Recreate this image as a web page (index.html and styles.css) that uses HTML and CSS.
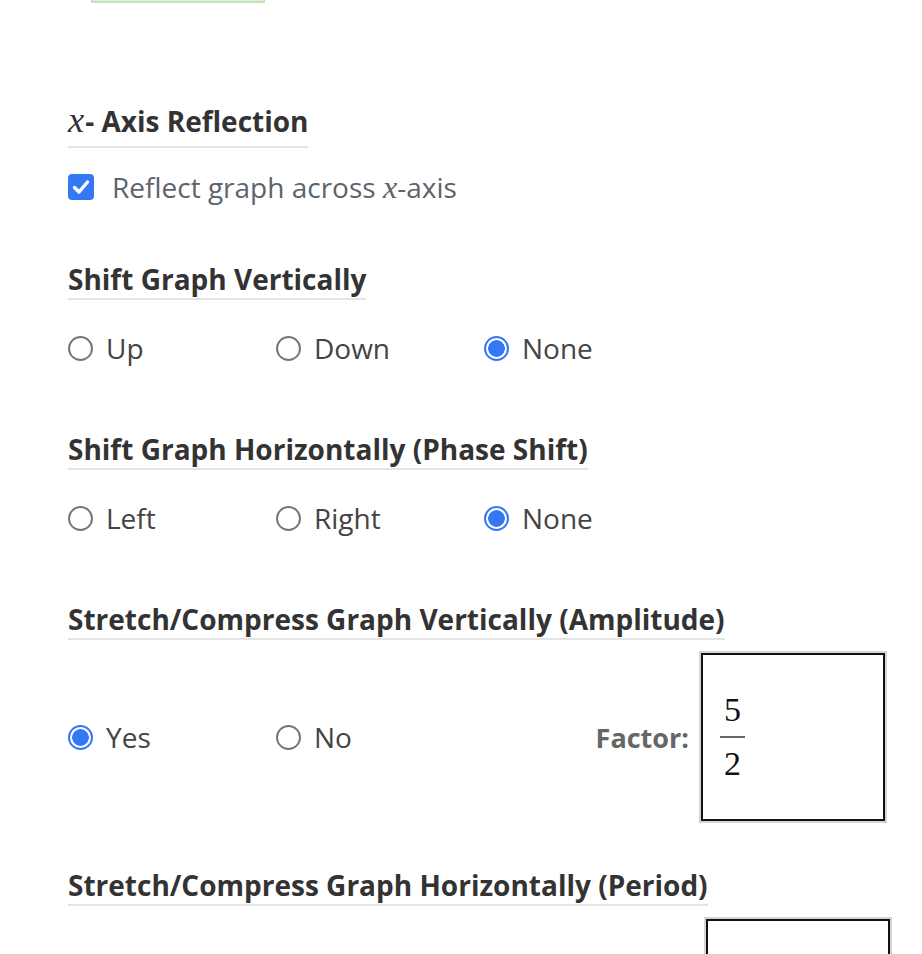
FILE: index.html
```html
<!DOCTYPE html>
<html>
    <head>
        <title>Graph Transformations</title>
        <meta charset="utf-8">
        <link rel="stylesheet" href="styles.css">
    </head>
    <body>
        <div class="top-box"></div>
        <form class="panel" name="graph">
            <section class="group first">
                <h2 class="title"><span class="var big">x</span>- Axis Reflection</h2>
                <div class="row check-row">
                    <label class="option">
                        <span class="check">
                            <svg width="26" height="26" viewBox="0 0 26 26"><rect x="0" y="0" width="26" height="26" rx="4" fill="#3478f6"/><path d="M6.5 13.5 L11 18 L19.5 8" fill="none" stroke="#fff" stroke-width="3.4" stroke-linecap="round" stroke-linejoin="round"/></svg>
                        </span>
                        <span class="check-text">Reflect graph across <span class="var">x</span>-axis</span>
                    </label>
                </div>
            </section>

            <section class="group">
                <h2 class="title">Shift Graph Vertically</h2>
                <div class="row">
                    <label class="option"><input type="radio" name="vshift" class="radio"> Up</label>
                    <label class="option"><input type="radio" name="vshift" class="radio"> Down</label>
                    <label class="option"><input type="radio" name="vshift" class="radio" checked> None</label>
                </div>
            </section>

            <section class="group">
                <h2 class="title">Shift Graph Horizontally (Phase Shift)</h2>
                <div class="row">
                    <label class="option"><input type="radio" name="hshift" class="radio"> Left</label>
                    <label class="option"><input type="radio" name="hshift" class="radio"> Right</label>
                    <label class="option"><input type="radio" name="hshift" class="radio" checked> None</label>
                </div>
            </section>

            <section class="group amp">
                <h2 class="title">Stretch/Compress Graph Vertically (Amplitude)</h2>
                <div class="row factor-row">
                    <label class="option"><input type="radio" name="amp" class="radio" checked> Yes</label>
                    <label class="option"><input type="radio" name="amp" class="radio"> No</label>
                    <div class="factor">
                        <span class="factor-label">Factor:</span>
                        <div class="math-box">
                            <span class="frac"><span class="num">5</span><span class="den">2</span></span>
                        </div>
                    </div>
                </div>
            </section>

            <section class="group">
                <h2 class="title">Stretch/Compress Graph Horizontally (Period)</h2>
                <div class="row factor-row">
                    <div class="factor shifted">
                        <div class="math-box"></div>
                    </div>
                </div>
            </section>
        </form>
    </body>
</html>
```

FILE: styles.css
```css
body{
    margin: 0;
    background-color: #fff;
    font-family: "Open Sans", Arial, sans-serif;
    color: #333;
}
.top-box{
    margin-left: 91px;
    width: 170px;
    height: 1px;
    background-color: #e2f1da;
    border: solid #c6e2b8 2px;
    border-top: none;
}
.panel{
    width: 819px;
    padding-left: 68px;
    padding-top: 101px;
}
.group{
    margin-bottom: 64px;
}
.group.first{
    margin-bottom: 55px;
}
.group.amp{
    margin-bottom: 45px;
}
.title{
    display: inline-block;
    margin: 0;
    font-size: 28px;
    line-height: 34px;
    font-weight: 700;
    color: #333;
    padding-bottom: 2px;
    border-bottom: solid #e4e4e4 2px;
}
.first .title{
    padding-bottom: 8px;
}
.var{
    font-family: "Liberation Serif", "Times New Roman", serif;
    font-style: italic;
    font-weight: 400;
    font-size: 1.15em;
}
.var.big{
    font-size: 1.3em;
    line-height: 0;
    margin-right: 1px;
}
.row{
    display: flex;
    align-items: center;
    height: 40px;
    margin-top: 28px;
}
.check-row{
    margin-top: 19px;
}
.option{
    display: flex;
    align-items: center;
    width: 208px;
    font-size: 28px;
    color: #444;
}
.check{
    display: flex;
    margin-right: 18px;
}
.check-text{
    color: #5d646c;
    white-space: nowrap;
}
.radio{
    appearance: none;
    -webkit-appearance: none;
    width: 25px;
    height: 25px;
    margin: 0 13px 0 0;
    border: solid #777 2px;
    border-radius: 50%;
    background-color: #fff;
}
.radio:checked{
    border-color: #3478f6;
    border-width: 2.5px;
    background: radial-gradient(circle, #3478f6 0 8px, #fff 8.6px);
}
.factor-row{
    height: 172px;
    margin-top: 11px;
}
.factor{
    display: flex;
    align-items: center;
    margin-left: auto;
}
.factor.shifted{
    margin-right: -5px;
    align-self: flex-start;
}
.factor-label{
    font-size: 27px;
    font-weight: 700;
    color: #666;
    margin-right: 10px;
}
.math-box{
    box-sizing: border-box;
    width: 184px;
    height: 168px;
    margin: 2px;
    border: solid #111 2px;
    box-shadow: 0 0 0 2px #d4d4d4;
    display: flex;
    align-items: center;
    padding-left: 17px;
}
.frac{
    display: flex;
    flex-direction: column;
    align-items: center;
    font-family: "Liberation Serif", "Times New Roman", serif;
    font-size: 34px;
    line-height: 38px;
    color: #111;
}
.num{
    padding: 0 4px 7px;
    border-bottom: solid #666 2px;
}
.den{
    padding-top: 7px;
}
```
